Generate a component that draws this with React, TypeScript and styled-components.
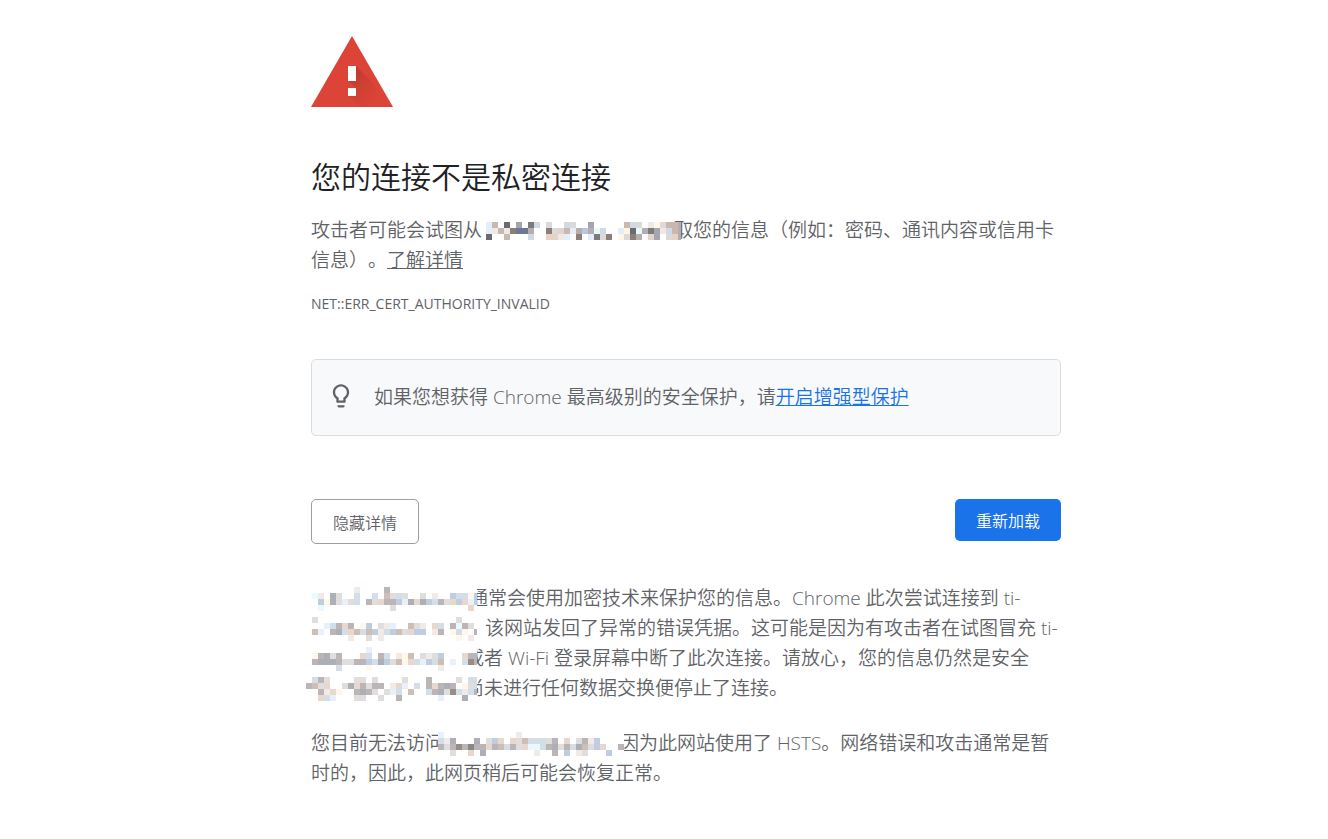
import React from "react";
import styled, { createGlobalStyle } from "styled-components";

const GlobalStyle = createGlobalStyle`
  * { box-sizing: border-box; }
  body {
    margin: 0;
    background: #fff;
    color: #5f6368;
    font-family: "Open Sans", "Noto Sans CJK SC", sans-serif;
    font-size: 19px;
    font-weight: 350;
    line-height: 30px;
    text-spacing-trim: space-all;
  }
`;

const Page = styled.div`
  padding: 36px 24px 40px 68px;
`;

const Content = styled.main`
  max-width: 750px;
  margin: 0 auto;
`;

const WarningIcon = styled.svg`
  display: block;
  width: 84px;
  height: 72px;
`;

const Title = styled.h1`
  margin: 51px 0 20px;
  color: #202124;
  font-size: 30px;
  font-weight: 350;
  line-height: 36px;
`;

const Paragraph = styled.p`
  margin: 0;

  & + & {
    margin-top: 25px;
  }
`;

const Link = styled.a<{ $accent?: boolean }>`
  color: ${(p) => (p.$accent ? "#1a73e8" : "inherit")};
  text-decoration: underline;
  text-decoration-thickness: 1px;
  text-underline-offset: 1px;
`;

const ErrorCode = styled.div`
  margin-top: 19px;
  font-size: 14px;
  font-weight: 400;
  line-height: 20px;
`;

const Tip = styled.section`
  display: flex;
  align-items: center;
  gap: 19px;
  min-height: 77px;
  margin-top: 45px;
  padding: 14px 15px 16px;
  border: 1px solid #dadce0;
  border-radius: 5px;
  background: #f8f9fa;
`;

const BulbIcon = styled.svg`
  flex: none;
  width: 28px;
  height: 28px;
  fill: #5f6368;
`;

const Actions = styled.div`
  display: flex;
  justify-content: space-between;
  align-items: flex-start;
  margin: 63px 0 39px;
`;

const Button = styled.button<{ $primary?: boolean }>`
  padding: ${(p) => (p.$primary ? "12px 21px 10px" : "13px 21px 10px")};
  border: ${(p) => (p.$primary ? "none" : "1px solid #9aa0a6")};
  border-radius: 5px;
  background: ${(p) => (p.$primary ? "#1a73e8" : "#fff")};
  color: ${(p) => (p.$primary ? "#fff" : "#5f6368")};
  font: inherit;
  font-size: 16px;
  line-height: 20px;
  cursor: pointer;
`;

const MosaicSvg = styled.svg<{ $before: number; $after: number }>`
  position: relative;
  vertical-align: middle;
  margin: -7px ${(p) => p.$after}px -5px ${(p) => p.$before}px;
  background: #fff;
`;

const palette: Record<string, string> = {
  a: "#6b6b6f",
  b: "#7d7a7a",
  c: "#a3a6ae",
  d: "#c8b8ae",
  e: "#e4eefb",
  f: "#cfdae6",
  g: "#dcdad9",
  h: "#e6d3c8",
  i: "#b5adb0",
  j: "#f0e8e4",
  k: "#8c7f7a",
  l: "#6c7896",
  m: "#b9c6dc",
  n: "#e6f9fd",
  o: "#fff6e8",
};

const CELL = 6;

type MosaicProps = {
  rows: string[];
  width: number;
  before?: number;
  after?: number;
  strength?: number;
};

function Mosaic({ rows, width, before = 0, after = 0, strength = 0.9 }: MosaicProps) {
  return (
    <MosaicSvg
      $before={before}
      $after={after}
      width={width}
      height={rows.length * CELL}
      shapeRendering="crispEdges"
      aria-hidden="true"
    >
      <g fillOpacity={strength}>
        {rows.flatMap((row, y) =>
          row.split("").map((key, x) =>
            palette[key] ? (
              <rect
                key={`${x}-${y}`}
                x={x * CELL}
                y={y * CELL}
                width={CELL}
                height={CELL}
                fill={palette[key]}
              />
            ) : null
          )
        )}
      </g>
    </MosaicSvg>
  );
}

const attackerHost = [
  "ed.a.c.bf.g..fg..c.....dfg.jogddi",
  "ejdjklli..kghdeiminf..eoanibcjfdi",
  "a..d...f..hhje.k.ebgk.ogki.hc.ghi",
];

const siteHost = [
  ".......j....i...............",
  "nj.cg..f..f.dgfg..g.j..mffom",
  ".mocgegf.ighiimechcmfighmhem",
  ".n...........g............h.",
];

const targetHost = [
  "g.......................g...",
  "..efihi.om.gje..dgj.hf.inig.",
  "de.icfhdfdmjfmdghmm.ji.ofo.i",
  "......j..g.j............o.j.",
];

const spoofedHost = [
  ".........e..................",
  "oicgi...hf.if.jod.gjgm...hii",
  "iccciggiimfcmgdohfemfd.e.fki",
  "....f....o...........j......",
];

const credentials = [
  ".fig....gg.g....g...i....g.ff",
  "idgh..gchigii.jhe.f.ihici.ogf",
  "..ijho..icig.gef.d..ficgkfjfi",
  "..hfe...gg..g..i......e...c..",
];

const visitedHost = [
  "e............j.................",
  "fjc...c.gmh.hgdfffgi.h.gijm....",
  "igikibiihidfighnnficgifcdgmh..i",
  "..g..h.c........j..i.m.jg...m..",
];

export default function App() {
  return (
    <>
      <GlobalStyle />
      <Page>
        <Content>
          <WarningIcon viewBox="0 0 84 72" role="img" aria-label="警告">
            <defs>
              <linearGradient id="shade" x1="0" y1="0" x2="1" y2="1">
                <stop offset="0" stopColor="#a8322a" stopOpacity="0.8" />
                <stop offset="0.6" stopColor="#c23a30" stopOpacity="0.2" />
                <stop offset="0.85" stopColor="#db4437" stopOpacity="0" />
              </linearGradient>
            </defs>
            <path d="M41 0 82 71H0Z" fill="#db4437" />
            <path d="M45 30 62 47 76 71H49L37 59 45 52 37 44Z" fill="url(#shade)" />
            <path d="M37 30h8v15h-8zM37 52h8v8h-8z" fill="#fff" />
          </WarningIcon>

          <Title>您的连接不是私密连接</Title>
          <Paragraph>
            攻击者可能会试图从
            <Mosaic rows={attackerHost} width={195} before={4} after={-7} strength={1} />
            取您的信息（例如：密码、通讯内容或信用卡信息）。
            <Link href="#learn-more">了解详情</Link>
          </Paragraph>
          <ErrorCode>NET::ERR_CERT_AUTHORITY_INVALID</ErrorCode>

          <Tip>
            <BulbIcon viewBox="0 1 24 24" aria-hidden="true">
              <path d="M9 21c0 .55.45 1 1 1h4c.55 0 1-.45 1-1v-1H9v1zm3-19C8.14 2 5 5.14 5 9c0 2.38 1.19 4.47 3 5.74V17c0 .55.45 1 1 1h6c.55 0 1-.45 1-1v-2.26c1.81-1.27 3-3.36 3-5.74 0-3.86-3.14-7-7-7zm2.85 11.1l-.85.6V16h-4v-2.3l-.85-.6C7.8 12.16 7 10.63 7 9c0-2.76 2.24-5 5-5s5 2.24 5 5c0 1.63-.8 3.16-2.15 4.1z" />
            </BulbIcon>
            <span>
              如果您想获得 Chrome 最高级别的安全保护，请
              <Link href="#enhanced-protection" $accent>
                开启增强型保护
              </Link>
            </span>
          </Tip>

          <Actions>
            <Button type="button">隐藏详情</Button>
            <Button type="button" $primary>
              重新加载
            </Button>
          </Actions>

          <Paragraph>
            <Mosaic rows={siteHost} width={165} before={1} after={-8} />
            通常会使用加密技术来保护您的信息。Chrome 此次尝试连接到 ti-
            <Mosaic rows={targetHost} width={165} before={1} after={8} />
            该网站发回了异常的错误凭据。这可能是因为有攻击者在试图冒充 ti-
            <Mosaic rows={spoofedHost} width={165} before={1} after={-12} />
            或者 Wi-Fi 登录屏幕中断了此次连接。请放心，您的信息仍然是安全
            <Mosaic rows={credentials} width={171} before={-5} after={-12} />
            尚未进行任何数据交换便停止了连接。
          </Paragraph>
          <Paragraph>
            您目前无法访问
            <Mosaic rows={visitedHost} width={186} before={-6} after={-4} />
            因为此网站使用了 HSTS。网络错误和攻击通常是暂时的，因此，此网页稍后可能会恢复正常。
          </Paragraph>
        </Content>
      </Page>
    </>
  );
}
